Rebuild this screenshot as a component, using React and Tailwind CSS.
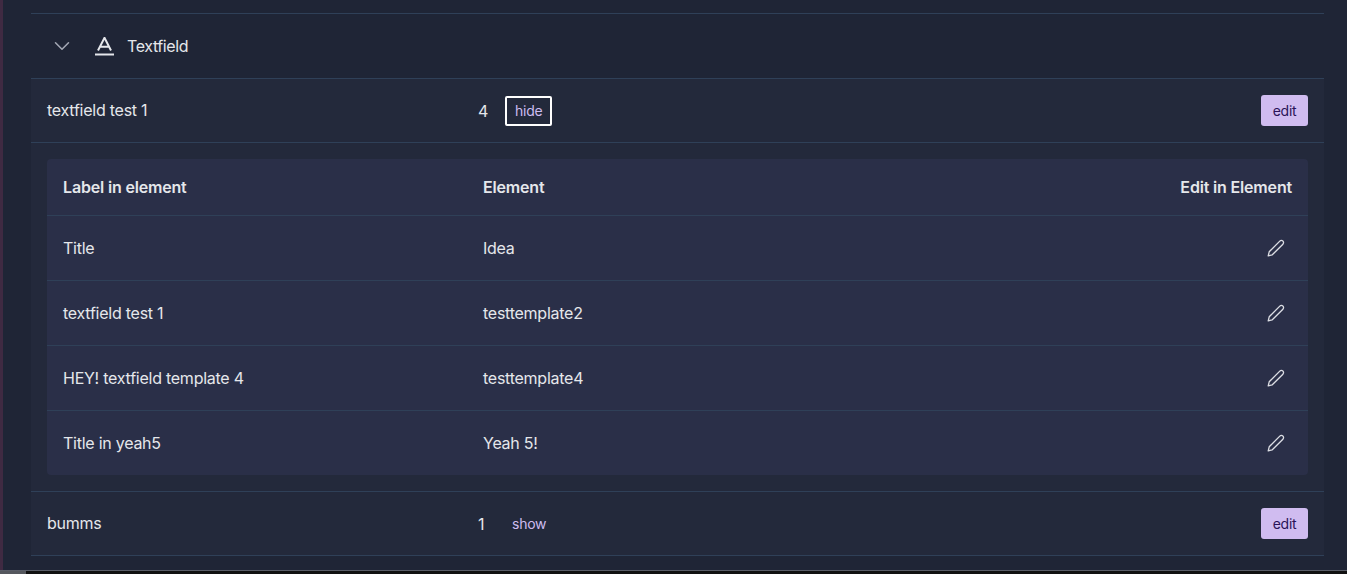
import { ChevronDown } from "lucide-react";

const rows = [
  { label: "Title", element: "Idea" },
  { label: "textfield test 1", element: "testtemplate2" },
  { label: "HEY! textfield template 4", element: "testtemplate4" },
  { label: "Title in yeah5", element: "Yeah 5!" },
];

function PencilIcon() {
  return (
    <svg width="18" height="18" viewBox="0 0 18 18" fill="none" stroke="#dcdee4" strokeWidth="1.3" strokeLinejoin="round" className="ml-auto mr-[7px]">
      <path d="M1.2 16.8 2.200 12.800 12.800 2.100c.9-.9 2.300-.9 3.100 0 .9.800.9 2.200 0 3.100L5.300 15.800z" />
    </svg>
  );
}

function GroupRow({ name, count, toggle, open }) {
  return (
    <div className="flex h-[64px] items-center border-b border-[#2f4058] px-4 tracking-[-0.25px]">
      <div className="mb-[2px] w-[431px] text-base text-[#e5e7eb]">{name}</div>
      <div className="flex items-center">
        <span className="w-[27px] text-base text-[#e5e7eb]">{count}</span>
        {open ? (
          <button className="h-[30px] rounded-[2px] border-2 border-white px-2 text-sm text-[#cdbcf0]">
            {toggle}
          </button>
        ) : (
          <button className="h-[30px] px-[7px] text-sm text-[#cdbcf0]">{toggle}</button>
        )}
      </div>
      <button className="ml-auto h-[31px] w-[47px] rounded-[3px] bg-[#d0bcf0] text-sm text-[#2a1458]">
        edit
      </button>
    </div>
  );
}

export default function App() {
  return (
    <div className="flex h-[574px] w-[1347px] flex-col overflow-hidden bg-[#1f2536] font-['Inter',sans-serif]">
      <div className="flex min-h-0 flex-1">
        <div className="w-[3px] bg-[#3f2a42]" />
        <div className="min-w-0 flex-1 pl-[28px] pr-[23px] pt-[13px]">
          <div className="flex h-[66px] items-center border-y border-[#2f4058] pl-[18px] text-[#e5e7eb]">
            <ChevronDown size={26} strokeWidth={1.4} className="text-[#a3a8b4]" />
            <svg width="19" height="19" viewBox="0 0 19 19" fill="none" stroke="#e5e7eb" strokeWidth="2" className="ml-[20px]">
              <path d="M3 13.500 9.500 .8 16 13.500M4.800 9.800h9.400" />
              <path d="M0 17.500h19" />
            </svg>
            <span className="ml-[13px] text-base tracking-[-0.4px]">Textfield</span>
          </div>
          <div className="bg-[#23293b]">
            <GroupRow name="textfield test 1" count="4" toggle="hide" open />
            <div className="border-b border-[#2f4058] p-4">
              <div className="rounded bg-[#2a2f48]">
                <div className="flex h-[57px] items-center border-b border-[#2f4058] px-4 text-base font-semibold tracking-[-0.17px] text-[#e5e7eb]">
                  <div className="w-[420px]">Label in element</div>
                  <div>Element</div>
                  <div className="ml-auto">Edit in Element</div>
                </div>
                {rows.map((row, i) => (
                  <div
                    key={row.label}
                    className={
                      i < rows.length - 1
                        ? "flex h-[65px] items-center border-b border-[#2f4058] px-4 text-base tracking-[-0.25px] text-[#e5e7eb]"
                        : "flex h-[64px] items-center px-4 text-base tracking-[-0.25px] text-[#e5e7eb]"
                    }
                  >
                    <div className="w-[420px]">{row.label}</div>
                    <div>{row.element}</div>
                    <PencilIcon />
                  </div>
                ))}
              </div>
            </div>
            <GroupRow name="bumms" count="1" toggle="show" />
          </div>
        </div>
      </div>
      <div className="flex h-[4px] border-t border-[#5a5e68] bg-[#111111]">
        <div className="w-[26px] bg-[#55585e]" />
      </div>
    </div>
  );
}
